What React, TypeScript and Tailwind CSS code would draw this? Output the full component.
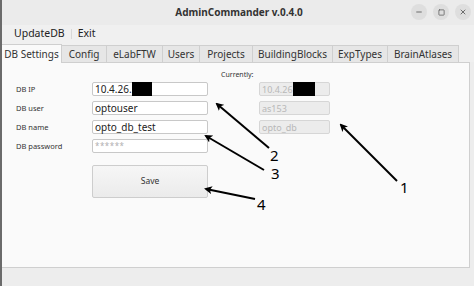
import { Minus, Square, X } from 'lucide-react';

const tabs = [
  { name: 'DB Settings', w: 'w-[60px]' },
  { name: 'Config', w: 'w-[45px]' },
  { name: 'eLabFTW', w: 'w-[56px]' },
  { name: 'Users', w: 'w-[37px]' },
  { name: 'Projects', w: 'w-[53px]' },
  { name: 'BuildingBlocks', w: 'w-[80px]' },
  { name: 'ExpTypes', w: 'w-[55px]' },
  { name: 'BrainAtlases', w: 'w-[71px]' },
];

const fields = [
  { label: 'DB IP', value: '10.4.26.', masked: true, current: '10.4.26', currentMasked: true },
  { label: 'DB user', value: 'optouser', current: 'as153' },
  { label: 'DB name', value: 'opto_db_test', current: 'opto_db' },
  { label: 'DB password', value: '******', placeholder: true },
];

function Arrow({ x1, y1, x2, y2 }: { x1: number; y1: number; x2: number; y2: number }) {
  return (
    <line x1={x1} y1={y1} x2={x2} y2={y2} stroke="black" strokeWidth="2" markerEnd="url(#head)" />
  );
}

export default function App() {
  return (
    <div
      className="relative w-[474px] h-[286px] overflow-hidden bg-[#ededed] flex flex-col border-l-2 border-[#6b6b6b]"
      style={{ fontFamily: '"Noto Sans", "DejaVu Sans", sans-serif' }}
    >
      {/* title bar */}
      <div className="h-[25px] shrink-0 bg-[#ebebeb] flex items-center relative">
        <div className="flex-1 text-center text-[10px] font-bold text-[#333] pl-[2px]">AdminCommander v.0.4.0</div>
        <div className="absolute right-[3px] top-[4px] flex gap-[6px]">
          <div className="w-[16px] h-[16px] rounded-full bg-[#dedede] flex items-center justify-center">
            <Minus className="w-[8px] h-[8px] text-[#555]" strokeWidth={2.5} />
          </div>
          <div className="w-[16px] h-[16px] rounded-full bg-[#dedede] flex items-center justify-center">
            <Square className="w-[7px] h-[7px] text-[#555]" strokeWidth={2.5} />
          </div>
          <div className="w-[16px] h-[16px] rounded-full bg-[#dedede] flex items-center justify-center">
            <X className="w-[8px] h-[8px] text-[#555]" strokeWidth={2.5} />
          </div>
        </div>
      </div>

      {/* menu bar */}
      <div className="h-[18px] shrink-0 bg-[#f0f0f0] flex items-center text-[10.5px] text-[#222] pl-[12px]">
        <span>UpdateDB</span>
        <span className="mx-[6px] w-px h-[10px] bg-[#d8d8d8]" />
        <span>Exit</span>
      </div>

      {/* tabs */}
      <div className="h-[19px] shrink-0 flex items-end bg-[#f0f0f0] text-[10px] text-[#333] whitespace-nowrap">
        {tabs.map((t, i) => (
          <div
            key={t.name}
            className={
              i === 0
                ? `${t.w} h-[19px] bg-[#fafafa] border-t border-r border-[#cfcfcf] flex items-center justify-center -mb-px z-10`
                : `${t.w} h-[17px] bg-[#e6e6e6] border-t border-r border-[#cfcfcf] flex items-center justify-center`
            }
          >
            {t.name}
          </div>
        ))}
      </div>

      {/* panel */}
      <div className="h-[206px] shrink-0 mr-[4px] bg-[#fafafa] border border-[#cfcfcf] border-l-0 flex flex-col pl-[14px]">
        <div className="pt-[7px] pl-[205px] text-[7px] leading-[10px] text-[#333]">Currently:</div>
        <div className="mt-[2px] flex flex-col gap-[5px]">
          {fields.map((f) => (
            <div key={f.label} className="flex items-center h-[14px]">
              <div className="w-[76px] text-[7.5px] text-[#333] mt-[2px]">{f.label}</div>
              <div className="w-[116px] h-[14px] bg-white border border-[#c8c8c8] rounded-[2px] flex items-center pl-[2px] text-[10px] leading-none">
                {f.placeholder ? (
                  <span className="text-[#b0b0b0] text-[8px] tracking-[0.5px]">{f.value}</span>
                ) : (
                  <span className="text-[#222]">{f.value}</span>
                )}
                {f.masked && <span className="w-[20px] h-[14px] bg-black" />}
              </div>
              {f.current && (
                <div className="ml-[51px] w-[71px] h-[14px] bg-[#ececec] border border-[#d6d6d6] rounded-[2px] flex items-center pl-[2px] text-[9px] leading-none text-[#b8b8b8]">
                  <span>{f.current}</span>
                  {f.currentMasked && <span className="w-[22px] h-[14px] bg-black" />}
                </div>
              )}
            </div>
          ))}
        </div>
        <button className="mt-[12px] ml-[76px] w-[116px] h-[33px] bg-gradient-to-b from-[#f6f6f6] to-[#ebebeb] border border-[#cdcdcd] rounded-[2px] text-[8.5px] text-[#333]">
          Save
        </button>
      </div>

      {/* annotations */}
      <svg className="absolute inset-0 pointer-events-none" width="474" height="286" viewBox="0 0 474 286">
        <defs>
          <marker id="head" markerWidth="8" markerHeight="8" refX="6" refY="4" orient="auto" markerUnits="userSpaceOnUse">
            <path d="M0,0 L8,4 L0,8 L2,4 Z" fill="black" />
          </marker>
        </defs>
        <Arrow x1={395} y1={181} x2={339} y2={125} />
        <Arrow x1={267} y1={148} x2={215} y2={104} />
        <Arrow x1={262} y1={170} x2={204} y2={136} />
        <Arrow x1={253} y1={199} x2={204} y2={189} />
      </svg>
      <div className="absolute left-[398px] top-[180px] text-[15px] text-black leading-[14px]">1</div>
      <div className="absolute left-[268px] top-[148px] text-[15px] text-black leading-[14px]">2</div>
      <div className="absolute left-[269px] top-[166px] text-[15px] text-black leading-[14px]">3</div>
      <div className="absolute left-[255px] top-[197px] text-[15px] text-black leading-[14px]">4</div>
    </div>
  );
}
